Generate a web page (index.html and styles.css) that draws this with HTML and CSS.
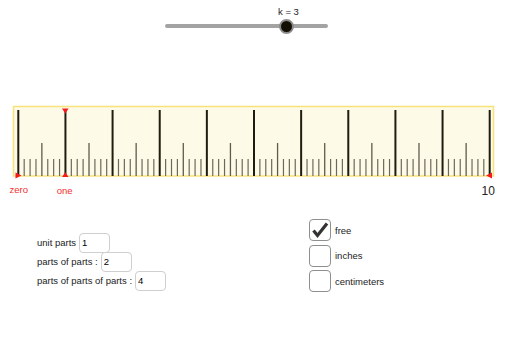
FILE: index.html
```html
<!DOCTYPE html>
<html lang="en">
<head>
    <meta charset="UTF-8">
    <title>Ruler</title>
    <link rel="stylesheet" href="styles.css">
</head>
<body>
    <div class="slider">
        <span class="slider-label">k = 3</span>
        <div class="slider-track"></div>
        <div class="slider-thumb"></div>
    </div>

    <svg class="ruler" width="512" height="100" viewBox="0 0 512 100">
        <rect class="ruler-box" x="13.5" y="6.5" width="480" height="69.5"/>
        <g id="ticks"></g>
        <polygon class="marker" points="62,8.5 68.6,8.5 65.3,13.5"/>
        <polygon class="marker" points="62,77 68.6,77 65.3,72.3"/>
        <polygon class="marker" points="15.5,72.5 15.5,78.5 21.5,75.5"/>
        <polygon class="marker" points="492,72.5 492,78.5 486,75.5"/>
        <text class="mark-label" x="9.5" y="93">zero</text>
        <text class="mark-label" x="56.8" y="93.5">one</text>
        <text class="end-label" x="481.5" y="95">10</text>
    </svg>

    <div class="controls">
        <div class="fields">
            <div class="field">unit parts<input type="text" value="1"></div>
            <div class="field">parts of parts :<input type="text" value="2"></div>
            <div class="field">parts of parts of parts :<input type="text" value="4"></div>
        </div>
        <div class="options">
            <div class="option">
                <span class="check">
                    <svg width="20" height="20" viewBox="0 0 20 20"><polyline points="3.5,10.5 7.5,15.5 17,3.5" fill="none" stroke="#333" stroke-width="3.2"/></svg>
                </span>
                free
            </div>
            <div class="option"><span class="check"></span>inches</div>
            <div class="option"><span class="check"></span>centimeters</div>
        </div>
    </div>

    <script>
        const ticks = document.getElementById('ticks');
        const step = 47.14 / 8;

        for (let i = 0; i <= 80; i++) {
            const x = 18.3 + i * step;
            let top = 59;
            let cls = 'tick-small';
            if (i % 8 === 0) {
                top = 10;
                cls = 'tick-major';
            } else if (i % 4 === 0) {
                top = 43;
                cls = 'tick-half';
            }
            const line = document.createElementNS('http://www.w3.org/2000/svg', 'line');
            line.setAttribute('x1', x);
            line.setAttribute('x2', x);
            line.setAttribute('y1', top);
            line.setAttribute('y2', 76);
            line.setAttribute('class', cls);
            ticks.appendChild(line);
        }
    </script>
</body>
</html>
```

FILE: styles.css
```css
* {
    box-sizing: border-box;
}

body {
    margin: 0;
    width: 512px;
    height: 340px;
    overflow: hidden;
    background: #fff;
    color: #222;
    font-family: "Liberation Sans", Arial, sans-serif;
    font-size: 9.5px;
}

/* slider */
.slider {
    position: relative;
    margin-left: 165px;
    width: 163px;
    height: 40px;
    padding-top: 6px;
}

.slider-label {
    display: block;
    margin-left: 113px;
    height: 11px;
    line-height: 11px;
    color: #222;
}

.slider-track {
    margin-top: 7px;
    height: 4px;
    border-radius: 2px;
    background: #a3a3a3;
}

.slider-thumb {
    position: absolute;
    left: 114px;
    top: 18.5px;
    width: 15px;
    height: 15px;
    border-radius: 50%;
    background: #140f05;
    border: 2.5px solid #8c8c8c;
}

/* ruler */
.ruler {
    display: block;
    margin-top: 60px;
}

.ruler-box {
    fill: #fefae8;
    stroke: #f8e27a;
    stroke-width: 1.5;
}

.tick-major {
    stroke: #1f1c10;
    stroke-width: 2;
}

.tick-half {
    stroke: #5f5b4c;
    stroke-width: 1.3;
}

.tick-small {
    stroke: #6d695a;
    stroke-width: 1.2;
}

.marker {
    fill: #f21c1c;
}

.mark-label {
    fill: #f23030;
    font-size: 9.5px;
}

.end-label {
    fill: #222;
    font-size: 12px;
}

/* controls */
.controls {
    display: flex;
    padding-left: 37px;
}

.fields {
    width: 272px;
    padding-top: 33px;
}

.field {
    display: flex;
    align-items: center;
    height: 19px;
}

.field input {
    width: 31px;
    height: 20px;
    margin-left: 3px;
    padding: 0 2px;
    border: 1px solid #cfcfcf;
    border-radius: 4px;
    background: #fff;
    color: #000;
    font-family: "Liberation Sans", Arial, sans-serif;
    font-size: 9.5px;
    outline: none;
}

.options {
    display: flex;
    flex-direction: column;
    gap: 3.5px;
    padding-top: 19px;
}

.option {
    display: flex;
    align-items: center;
    gap: 4px;
    height: 22px;
}

.check {
    display: flex;
    align-items: center;
    justify-content: center;
    width: 22px;
    height: 22px;
    border: 1px solid #8f8f8f;
    border-radius: 4px;
    background: #fff;
}
```
